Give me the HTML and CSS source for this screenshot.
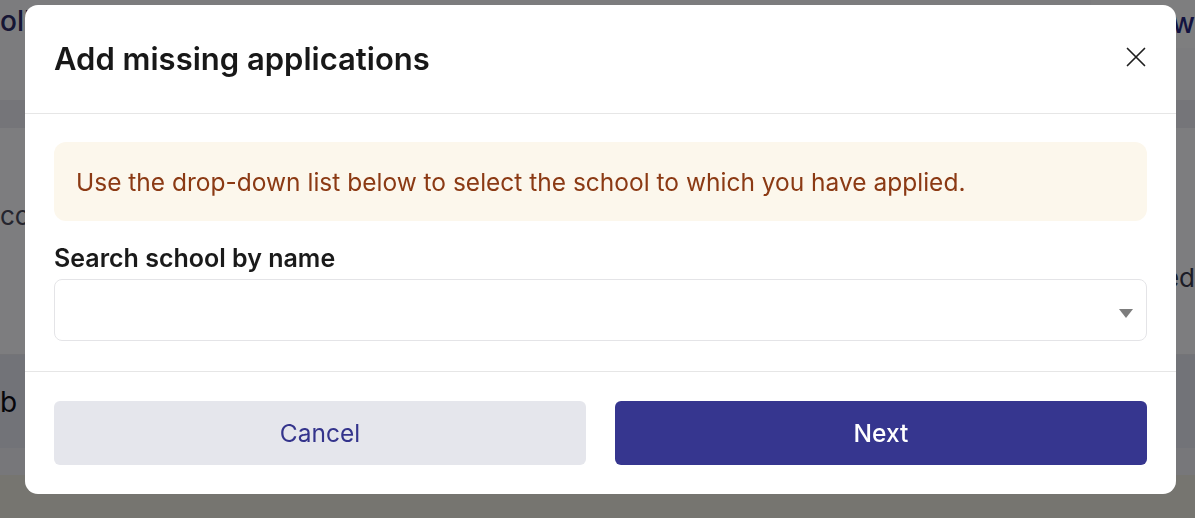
FILE: index.html
```html
<!DOCTYPE html>
<html lang="en">
<head>
<meta charset="utf-8">
<title>Add missing applications</title>
<link rel="stylesheet" href="styles.css">
</head>
<body>
<div class="page">
  <div class="page-top">
    <div class="page-title">olleges</div>
    <div class="page-action">Follow</div>
  </div>
  <div class="page-thead"></div>
  <div class="page-row tall">
    <span class="cell-left">co</span>
    <span class="cell-right">Applied</span>
  </div>
  <div class="page-row dark">
    <span class="cell-left big">b</span>
  </div>
  <div class="page-row thin"></div>
  <div class="page-foot"></div>
</div>

<div class="overlay">
  <div class="modal" role="dialog" aria-labelledby="modal-title">
    <div class="modal-header">
      <h2 id="modal-title" class="modal-title">Add missing applications</h2>
      <button class="close-btn" aria-label="Close">
        <svg width="20" height="20" viewBox="0 0 20 20" fill="none" stroke="#1f1f1f" stroke-width="1.7" stroke-linecap="round">
          <path d="M1.5 1.5 L18.5 18.5 M18.5 1.5 L1.5 18.5"/>
        </svg>
      </button>
    </div>
    <div class="modal-body">
      <div class="alert">Use the drop-down list below to select the school to which you have applied.</div>
      <label class="field-label" for="school">Search school by name</label>
      <div class="select" id="school">
        <span class="caret"></span>
      </div>
    </div>
    <div class="modal-footer">
      <button class="btn btn-secondary">Cancel</button>
      <button class="btn btn-primary">Next</button>
    </div>
  </div>
</div>
</body>
</html>
```

FILE: styles.css
```css
* { box-sizing: border-box; }

html, body {
  margin: 0;
  padding: 0;
  width: 1195px;
  height: 518px;
  overflow: hidden;
}

body {
  font-family: Inter, "Noto Sans", "Liberation Sans", sans-serif;
  background: #f8f8fc;
}

/* ---------- background page ---------- */
.page {
  display: flex;
  flex-direction: column;
  height: 518px;
}

.page-top {
  height: 100px;
  display: flex;
  justify-content: space-between;
  align-items: flex-start;
  background: #f8f8fc;
}

.page-title {
  font-size: 28px;
  font-weight: 500;
  color: #2c2c6a;
  padding-top: 4px;
}

.page-action {
  width: 104px;
  height: 48px;
  background: #fcfcfe;
  color: #262680;
  font-size: 28px;
  font-weight: 500;
  padding-top: 6px;
  text-align: right;
  white-space: nowrap;
}

.page-thead {
  height: 28px;
  background: #ebebf2;
}

.page-row {
  display: flex;
  justify-content: space-between;
  background: #fafafe;
}

.page-row.tall {
  height: 227px;
  border-bottom: 1px solid #e8e8ee;
}

.page-row.dark {
  height: 93px;
  background: #e4e6f0;
  align-items: center;
}

.page-row.thin {
  height: 27px;
  background: #eeeef4;
}

.cell-left {
  font-size: 26px;
  color: #4a4a5c;
  margin-top: 72px;
}

.cell-left.big {
  color: #0c0c14;
  margin: 0;
  font-size: 28px;
}

.cell-right {
  font-size: 26px;
  color: #38384c;
  margin-top: 134px;
}

.page-foot {
  flex: 1;
  background: #ecebe0;
}

/* ---------- overlay ---------- */
.overlay {
  position: fixed;
  inset: 0;
  background: rgba(0, 0, 0, 0.5);
  padding: 5px 0 0 25px;
}

.modal {
  width: 1151px;
  height: 489px;
  background: #ffffff;
  border-radius: 13px;
  display: flex;
  flex-direction: column;
  overflow: hidden;
}

.modal-header {
  height: 109px;
  flex: none;
  display: flex;
  align-items: center;
  justify-content: space-between;
  padding: 0 30px 0 29px;
  border-bottom: 1px solid #e6e6e6;
}

.modal-title {
  margin: 0;
  padding-bottom: 2px;
  font-size: 31px;
  font-weight: 600;
  color: #181818;
}

.close-btn {
  background: none;
  border: 0;
  padding: 0;
  width: 20px;
  height: 20px;
  margin-bottom: 4px;
  display: flex;
  cursor: pointer;
}

.modal-body {
  flex: none;
  height: 258px;
  padding: 28px 29px 0 29px;
  border-bottom: 1px solid #e6e6e6;
  display: flex;
  flex-direction: column;
}

.alert {
  height: 79px;
  background: #fcf7ec;
  border-radius: 12px;
  color: #8b3a14;
  font-size: 24.5px;
  display: flex;
  align-items: center;
  padding: 0 22px;
}

.field-label {
  margin-top: 22px;
  font-size: 25px;
  font-weight: 600;
  color: #1a1a1a;
  line-height: 31px;
}

.select {
  margin-top: 5px;
  height: 62px;
  border: 1px solid #e4e4e7;
  border-radius: 8px;
  display: flex;
  align-items: center;
  justify-content: flex-end;
  padding-right: 13px;
}

.caret {
  width: 0;
  height: 0;
  border-left: 7px solid transparent;
  border-right: 7px solid transparent;
  border-top: 9px solid #7d7d7d;
  margin-top: 6px;
}

.modal-footer {
  flex: 1;
  display: flex;
  gap: 29px;
  padding: 29px 29px 0 29px;
}

.btn {
  flex: 1;
  height: 64px;
  border: 0;
  border-radius: 6px;
  font-family: inherit;
  font-size: 24.5px;
  cursor: pointer;
}

.btn-secondary {
  background: #e5e6ec;
  color: #34348c;
}

.btn-primary {
  background: #36368f;
  color: #ffffff;
  font-weight: 500;
}
```
